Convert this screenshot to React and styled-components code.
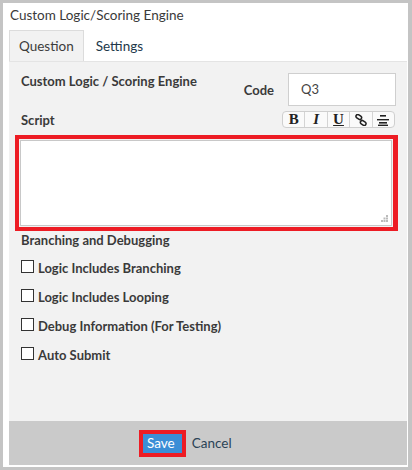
import React from 'react';
import styled, { createGlobalStyle } from 'styled-components';

const GlobalStyle = createGlobalStyle`
  html, body {
    margin: 0;
    background: #c4c4c4;
  }
  body {
    font-family: Lato, "Open Sans", sans-serif;
  }
`;

const Frame = styled.div`
  box-sizing: border-box;
  width: 412px;
  height: 470px;
  padding: 3px 4px 3px 3px;
`;

const Dialog = styled.div`
  box-sizing: border-box;
  height: 100%;
  background: #fff;
  padding: 0 1px 2px 6px;
  display: flex;
  flex-direction: column;
`;

const Title = styled.div`
  height: 27px;
  line-height: 25px;
  padding-left: 1px;
  font-size: 13.5px;
  color: #3a3a3a;
`;

const TabBar = styled.div`
  display: flex;
  height: 31px;
`;

const Tab = styled.div`
  box-sizing: border-box;
  padding: 0 9px;
  line-height: 30px;
  font-size: 13.5px;
  color: ${p => (p.active ? '#3c3c3c' : '#22384a')};
  background: ${p => (p.active ? '#f2f2f2' : 'transparent')};
  border: 1px solid ${p => (p.active ? '#dcdcdc' : 'transparent')};
  border-bottom: none;
  margin-right: 2px;
`;

const Panel = styled.div`
  box-sizing: border-box;
  height: 360px;
  background: #f2f2f2;
  border-top: 1px solid #e4e4e4;
  padding: 11px 11px 0 12px;
  display: flex;
  flex-direction: column;
`;

const Label = styled.div`
  font-size: 13px;
  font-weight: 700;
  color: #3a3a3a;
`;

const TopRow = styled.div`
  display: flex;
  justify-content: space-between;
  align-items: flex-start;
`;

const CodeGroup = styled.div`
  display: flex;
  align-items: center;
  gap: 14px;
`;

const CodeInput = styled.div`
  box-sizing: border-box;
  width: 108px;
  height: 33px;
  background: #fff;
  border: 1px solid #cfcfcf;
  padding-left: 12px;
  line-height: 31px;
  font-size: 13px;
  color: #444;
`;

const ScriptRow = styled.div`
  display: flex;
  justify-content: space-between;
  align-items: center;
  margin-top: 5px;
  height: 17px;
`;

const Toolbar = styled.div`
  display: flex;
  border: 1px solid #cfcfcf;
  border-radius: 4px;
  background: #fafafa;
  height: 17px;
  box-sizing: border-box;
  margin-right: 1px;
`;

const ToolButton = styled.div`
  width: 21.4px;
  height: 15px;
  display: flex;
  align-items: center;
  justify-content: center;
  border-left: ${p => (p.first ? 'none' : '1px solid #d4d4d4')};
  font-family: "Liberation Serif", serif;
  font-size: 15px;
  font-weight: 700;
  color: #222;
  font-style: ${p => (p.italic ? 'italic' : 'normal')};
  text-decoration: ${p => (p.underline ? 'underline' : 'none')};
`;

const Highlight = styled.div`
  position: relative;
  margin: 7px -2px 0 -6px;
  border: 4px solid #ed1c24;
  border-right-width: 5px;
  padding: 1px;
`;

const ScriptArea = styled.textarea`
  display: block;
  box-sizing: border-box;
  width: 100%;
  height: 86px;
  border: 1px solid #c8c8c8;
  background: #fff;
  resize: none;
  outline: none;
  margin: 0;
`;

const Grip = styled.svg`
  position: absolute;
  right: 5px;
  bottom: 5px;
`;

const Section = styled(Label)`
  margin-top: 1px;
`;

const CheckList = styled.div`
  display: flex;
  flex-direction: column;
  gap: 12px;
  margin-top: 11px;
`;

const CheckRow = styled.label`
  display: flex;
  align-items: center;
  gap: 4px;
  height: 17px;
`;

const Box = styled.span`
  box-sizing: border-box;
  width: 13px;
  height: 13px;
  border: 1px solid #333;
  background: #fff;
  margin-bottom: 3px;
`;

const Footer = styled.div`
  height: 44px;
  background: #cacaca;
  display: flex;
  align-items: center;
  padding-left: 130px;
  gap: 6px;
`;

const SaveWrap = styled.div`
  border: 4px solid #ed1c24;
  margin-top: 1px;
`;

const SaveButton = styled.div`
  background: #3b8ed6;
  color: #fff;
  font-size: 13.5px;
  line-height: 19px;
  padding: 0 7px 0 4px;
`;

const CancelLink = styled.div`
  font-size: 13.5px;
  color: #2a4356;
`;

function LinkIcon() {
  return (
    <svg width="12" height="12" viewBox="0 0 12 12">
      <rect x="0.8" y="1.2" width="6" height="3.6" rx="1.8" transform="rotate(35 3.8 3)" fill="none" stroke="#222" strokeWidth="1.5" />
      <rect x="5.2" y="7.2" width="6" height="3.6" rx="1.8" transform="rotate(35 8.2 9)" fill="none" stroke="#222" strokeWidth="1.5" />
    </svg>
  );
}

function StrikeIcon() {
  return (
    <svg width="12" height="12" viewBox="0 0 12 12">
      <rect x="3" y="1" width="6" height="1.6" fill="#222" />
      <rect x="0" y="5" width="12" height="1.4" fill="#222" />
      <rect x="2" y="8" width="8" height="1.6" fill="#222" />
      <rect x="1" y="10.6" width="10" height="1.4" fill="#222" />
    </svg>
  );
}

const checks = [
  'Logic Includes Branching',
  'Logic Includes Looping',
  'Debug Information (For Testing)',
  'Auto Submit',
];

export default function App() {
  return (
    <>
      <GlobalStyle />
      <Frame>
        <Dialog>
          <Title>Custom Logic/Scoring Engine</Title>
          <TabBar>
            <Tab active>Question</Tab>
            <Tab>Settings</Tab>
          </TabBar>
          <Panel>
            <TopRow>
              <Label>Custom Logic / Scoring Engine</Label>
              <CodeGroup>
                <Label>Code</Label>
                <CodeInput>Q3</CodeInput>
              </CodeGroup>
            </TopRow>
            <ScriptRow>
              <Label>Script</Label>
              <Toolbar>
                <ToolButton first>B</ToolButton>
                <ToolButton italic>I</ToolButton>
                <ToolButton underline>U</ToolButton>
                <ToolButton><LinkIcon /></ToolButton>
                <ToolButton><StrikeIcon /></ToolButton>
              </Toolbar>
            </ScriptRow>
            <Highlight>
              <ScriptArea />
              <Grip width="7" height="7" viewBox="0 0 7 7">
                <rect x="5" y="0" width="2" height="2" fill="#bbb" />
                <rect x="2.5" y="2.5" width="2" height="2" fill="#bbb" />
                <rect x="5" y="2.5" width="2" height="2" fill="#bbb" />
                <rect x="0" y="5" width="2" height="2" fill="#bbb" />
                <rect x="2.5" y="5" width="2" height="2" fill="#bbb" />
                <rect x="5" y="5" width="2" height="2" fill="#bbb" />
              </Grip>
            </Highlight>
            <Section>Branching and Debugging</Section>
            <CheckList>
              {checks.map(c => (
                <CheckRow key={c}>
                  <Box />
                  <Label>{c}</Label>
                </CheckRow>
              ))}
            </CheckList>
          </Panel>
          <Footer>
            <SaveWrap>
              <SaveButton>Save</SaveButton>
            </SaveWrap>
            <CancelLink>Cancel</CancelLink>
          </Footer>
        </Dialog>
      </Frame>
    </>
  );
}
